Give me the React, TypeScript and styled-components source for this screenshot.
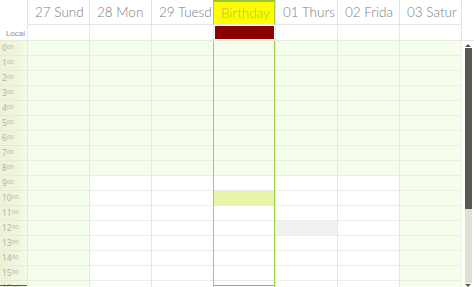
import React from "react";
import styled, { createGlobalStyle, css } from "styled-components";

const GlobalStyle = createGlobalStyle`
  html, body {
    margin: 0;
    padding: 0;
    background: #ffffff;
  }
  body {
    font-family: "Open Sans", "Noto Sans", sans-serif;
  }
`;

// header labels are shown as the control clips them
const days = [
  { title: "27 Sund", weekend: true },
  { title: "28 Mon" },
  { title: "29 Tuesd" },
  { title: "Birthday", special: true },
  { title: "01 Thurs" },
  { title: "02 Frida" },
  { title: "03 Satur", weekend: true },
];

// only the hours that fit in the visible body
const hours = Array.from({ length: 17 }, (_, i) => i);
const ROW = 15;

const cellTint = (dayIndex: number, hour: number) => {
  if (dayIndex === 3 && hour === 10) return "#e9f4ab";
  if (dayIndex === 4 && hour === 12) return "#f1f2ef";
  const weekend = days[dayIndex].weekend;
  if (weekend || hour < 9 || hour >= 18) return "#f5fdec";
  return "#ffffff";
};

const App = () => {
  return (
    <>
      <GlobalStyle />
      <Scheduler>
        <HeaderRow>
          <Corner />
          {days.map((d) => (
            <DayHead key={d.title} $special={d.special}>
              <HeadText $special={d.special}>{d.title}</HeadText>
            </DayHead>
          ))}
          <HeadFill />
        </HeaderRow>
        <AllDayRow>
          <LocalLabel>Local</LocalLabel>
          {days.map((d) => (
            <AllDayCell key={d.title}>{d.special && <AllDayEvent />}</AllDayCell>
          ))}
          <HeadFill />
        </AllDayRow>
        <Body>
          <TimeColumn>
            {hours.map((h) => (
              <TimeCell key={h}>
                {h}
                <sup>00</sup>
              </TimeCell>
            ))}
            <NowMarker $top={16 * ROW + 4} />
          </TimeColumn>
          {days.map((d, di) => (
            <DayColumn key={d.title} $special={d.special}>
              {hours.map((h) => (
                <SlotCell key={h} $bg={cellTint(di, h)} />
              ))}
              {d.special && <NowLine $top={16 * ROW + 4} />}
            </DayColumn>
          ))}
          <ScrollBar>
            <ArrowUp />
            <Thumb />
            <Track />
            <ArrowDown />
          </ScrollBar>
        </Body>
      </Scheduler>
    </>
  );
};

export default App;

const Scheduler = styled.div`
  width: 474px;
  height: 287px;
  overflow: hidden;
  display: flex;
  flex-direction: column;
  background: #ffffff;
`;

const rowGrid = css`
  display: grid;
  grid-template-columns: 27px repeat(7, 62px) 1fr;
`;

const HeaderRow = styled.div`
  ${rowGrid}
  height: 25px;
`;

const Corner = styled.div``;

const DayHead = styled.div<{ $special?: boolean }>`
  box-sizing: border-box;
  border-left: 1px solid #e3e3e3;
  border-bottom: 1px solid #e6e6e6;
  display: flex;
  align-items: center;
  overflow: hidden;
  ${(p) =>
    p.$special &&
    css`
      background: #ffff00;
      border-top: 2px solid #9cc33a;
      border-left: 1px solid #a6cf48;
      border-right: 1px solid #a6cf48;
    `}
`;

const HeadText = styled.span<{ $special?: boolean }>`
  display: block;
  margin-left: 7px;
  white-space: nowrap;
  font-family: "Lato", "Open Sans", sans-serif;
  font-size: 13.5px;
  font-weight: 300;
  color: ${(p) => (p.$special ? "#a9bd4c" : "#7d7d7d")};
  line-height: 20px;
`;

const HeadFill = styled.div`
  border-left: 1px solid #e3e3e3;
`;

const AllDayRow = styled.div`
  ${rowGrid}
  height: 15px;
  border-bottom: 1px solid #e6ebdc;
`;

const LocalLabel = styled.div`
  font-family: "Liberation Sans", Arial, sans-serif;
  font-size: 8px;
  color: #8e8e8e;
  text-align: right;
  padding-right: 2px;
  line-height: 17px;
`;

const AllDayCell = styled.div`
  border-left: 1px solid #e8e8e8;
  padding: 1px 1px 0;
`;

const AllDayEvent = styled.div`
  height: 13px;
  background: #8b0000;
`;

const Body = styled.div`
  flex: 1;
  display: flex;
  overflow: hidden;
`;

const TimeColumn = styled.div`
  position: relative;
  width: 27px;
  flex: none;
  background: linear-gradient(to right, #eff1d8 0%, #f1f6de 75%, #f5fbe9 100%);
`;

const TimeCell = styled.div`
  height: ${ROW}px;
  box-sizing: border-box;
  border-bottom: 1px solid #e6ead6;
  font-size: 8.5px;
  color: #aeaea4;
  padding: 1px 0 0 2px;
  line-height: 11px;

  sup {
    font-size: 6px;
    vertical-align: 2px;
  }
`;

const DayColumn = styled.div<{ $special?: boolean }>`
  position: relative;
  width: 62px;
  flex: none;
  box-sizing: border-box;
  border-left: 1px solid #e6e8e2;
  ${(p) =>
    p.$special &&
    css`
      border-left: 1px solid #a6cf48;
      border-right: 1px solid #a6cf48;
    `}
`;

const SlotCell = styled.div<{ $bg: string }>`
  height: ${ROW}px;
  box-sizing: border-box;
  border-bottom: 1px solid #eaeee4;
  background: ${(p) => p.$bg};
`;

const NowMarker = styled.div<{ $top: number }>`
  position: absolute;
  left: 0;
  right: 0;
  top: ${(p) => p.$top}px;
  height: 1px;
  background: #4a6a2a;
`;

const NowLine = styled.div<{ $top: number }>`
  position: absolute;
  left: 0;
  right: 0;
  top: ${(p) => p.$top}px;
  height: 1px;
  background: #8fb63a;
`;

const ScrollBar = styled.div`
  flex: 1;
  display: flex;
  flex-direction: column;
  align-items: center;
  padding: 3px 0 0;
  background: #ffffff;
  border-left: 1px solid #eeeeee;
`;

const ArrowUp = styled.div`
  width: 0;
  height: 0;
  border-left: 3px solid transparent;
  border-right: 3px solid transparent;
  border-bottom: 3px solid #555555;
  margin-bottom: 1px;
`;

const Thumb = styled.div`
  width: 7px;
  height: 161px;
  background: #585a52;
`;

const Track = styled.div`
  width: 7px;
  flex: 1;
  background: #dfe0cf;
`;

const ArrowDown = styled.div`
  width: 0;
  height: 0;
  margin-top: 1px;
  border-left: 3px solid transparent;
  border-right: 3px solid transparent;
  border-top: 3px solid #555555;
`;
